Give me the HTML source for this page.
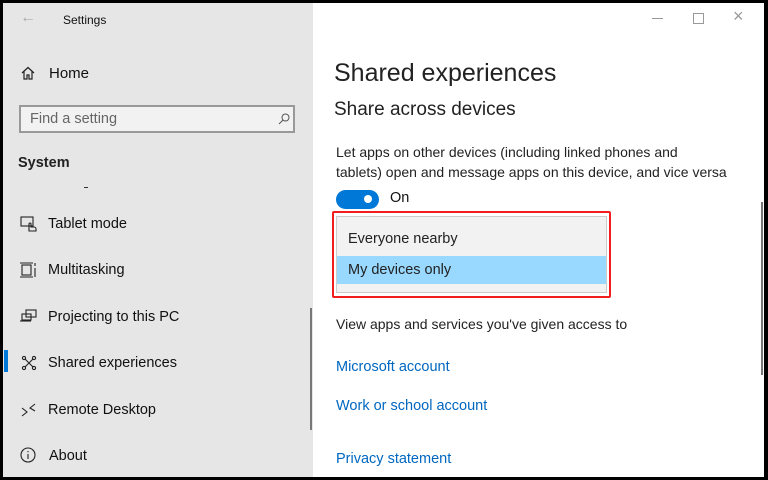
<!DOCTYPE html><html><head><style>
body{margin:0;width:768px;height:480px;background:#000;font-family:"Liberation Sans",sans-serif;overflow:hidden;position:relative}
.win{position:absolute;left:3px;top:3px;width:761px;height:474px;background:#fff;overflow:hidden}
.side{position:absolute;left:0;top:0;width:310px;height:474px;background:#e6e6e6}
.t{position:absolute;white-space:nowrap;color:#111}
.nav{font-size:14.5px}
.ic{position:absolute}
a{color:#0067c0;text-decoration:none}
</style></head><body><div class="win">
<div class="side">
<div class="t" style="left:17px;top:6px;font-size:16px;color:#aaa">&#8592;</div>
<div class="t" style="left:60px;top:10px;font-size:12px">Settings</div>
<svg class="ic" style="left:18px;top:63px" width="14" height="14" viewBox="0 0 14 14" fill="none" stroke="#222" stroke-width="1.2"><path d="M1 7L7 1.5 13 7M3 5.5V13H6V9H8V13H11V5.5"/></svg>
<div class="t nav" style="left:46px;top:62px;font-size:15px">Home</div>
<div style="position:absolute;left:16px;top:102px;width:276px;height:28px;border:2px solid #999;background:#f2f2f2;box-sizing:border-box"></div>
<div class="t" style="left:27px;top:108px;font-size:14.5px;color:#666">Find a setting</div>
<svg class="ic" style="left:275px;top:110px" width="12" height="12" viewBox="0 0 12 12" fill="none" stroke="#555"><circle cx="7.5" cy="4.5" r="3.5"/><path d="M5 7L1 11"/></svg>
<div class="t" style="left:15px;top:152px;font-size:14.5px;font-weight:bold;color:#222">System</div>
<div style="position:absolute;left:81px;top:184px;width:4px;height:1px;background:#333"></div>
<svg class="ic" style="left:17px;top:213px" width="18" height="16" viewBox="0 0 18 16" fill="none" stroke="#222" stroke-width="1.1"><rect x="1" y="1" width="12" height="9"/><path d="M9 15V8a1 1 0 012 0v3h3a2 2 0 012 2v2z"/></svg>
<div class="t nav" style="left:45px;top:213px">Tablet mode</div>
<svg class="ic" style="left:17px;top:259px" width="16" height="16" viewBox="0 0 16 16" fill="none" stroke="#222" stroke-width="1.1"><rect x="2" y="3" width="9" height="10"/><path d="M0 1H13M0 15H13M15 1V4M15 6V15"/></svg>
<div class="t nav" style="left:45px;top:259px">Multitasking</div>
<svg class="ic" style="left:17px;top:306px" width="18" height="14" viewBox="0 0 18 14" fill="none" stroke="#222" stroke-width="1.1"><rect x="6" y="1" width="10" height="7"/><rect x="2" y="5" width="9" height="6"/><path d="M0 12H11"/></svg>
<div class="t nav" style="left:45px;top:306px">Projecting to this PC</div>
<div style="position:absolute;left:1px;top:347px;width:4px;height:22px;background:#0078d7"></div>
<svg class="ic" style="left:18px;top:352px" width="16" height="16" viewBox="0 0 16 16" fill="none" stroke="#222" stroke-width="1.1"><circle cx="3" cy="3" r="1.6"/><circle cx="13" cy="3" r="1.6"/><circle cx="3" cy="13" r="1.6"/><circle cx="13" cy="13" r="1.6"/><path d="M4 4L12 12M12 4L4 12"/></svg>
<div class="t nav" style="left:45px;top:352px">Shared experiences</div>
<svg class="ic" style="left:18px;top:399px" width="16" height="16" viewBox="0 0 16 16" fill="none" stroke="#222" stroke-width="1.1"><path d="M1 6L6 10 1 14M14 2L9 6 14 9"/></svg>
<div class="t nav" style="left:45px;top:399px">Remote Desktop</div>
<svg class="ic" style="left:17px;top:444px" width="16" height="16" viewBox="0 0 16 16" fill="none" stroke="#222" stroke-width="1.1"><circle cx="8" cy="8" r="7"/><path d="M8 7V12M8 4V5.2"/></svg>
<div class="t nav" style="left:46px;top:445px">About</div>
<div style="position:absolute;left:307px;top:305px;width:2px;height:122px;background:#777"></div>
</div>
<div style="position:absolute;left:649px;top:15px;width:11px;height:1px;background:#999"></div>
<div style="position:absolute;left:690px;top:10px;width:9px;height:9px;border:1px solid #999"></div>
<div class="t" style="left:730px;top:3px;font-size:18px;color:#999">&#215;</div>
<div class="t" style="left:331px;top:56px;font-size:25px;color:#222">Shared experiences</div>
<div class="t" style="left:331px;top:96px;font-size:19px;color:#222">Share across devices</div>
<div class="t" style="left:333px;top:139px;font-size:14px;line-height:20px;color:#222">Let apps on other devices (including linked phones and<br>tablets) open and message apps on this device, and vice versa</div>
<div style="position:absolute;left:333px;top:187px;width:43px;height:19px;border-radius:10px;background:#0078d7"></div>
<div style="position:absolute;left:361px;top:192px;width:8px;height:8px;border-radius:50%;background:#fff"></div>
<div class="t" style="left:387px;top:187px;font-size:14.5px">On</div>
<div style="position:absolute;left:329px;top:208px;width:279px;height:87px;border:2px solid #f21d1d;border-radius:2px;box-sizing:border-box;background:#fff"></div>
<div style="position:absolute;left:333px;top:213px;width:271px;height:77px;border:1px solid #ccc;background:#f2f2f2;box-sizing:border-box"></div>
<div class="t" style="left:345px;top:228px;font-size:14.5px;color:#222">Everyone nearby</div>
<div style="position:absolute;left:334px;top:253px;width:269px;height:28px;background:#99d8ff"></div>
<div class="t" style="left:345px;top:259px;font-size:14.5px;color:#222">My devices only</div>
<div class="t" style="left:333px;top:313px;font-size:14px;color:#222">View apps and services you've given access to</div>
<div class="t" style="left:333px;top:356px;font-size:14.5px"><a>Microsoft account</a></div>
<div class="t" style="left:333px;top:395px;font-size:14.5px"><a>Work or school account</a></div>
<div class="t" style="left:333px;top:448px;font-size:14.5px"><a>Privacy statement</a></div>
<div style="position:absolute;left:758px;top:199px;width:2px;height:173px;background:#777"></div>
</div></body></html>
